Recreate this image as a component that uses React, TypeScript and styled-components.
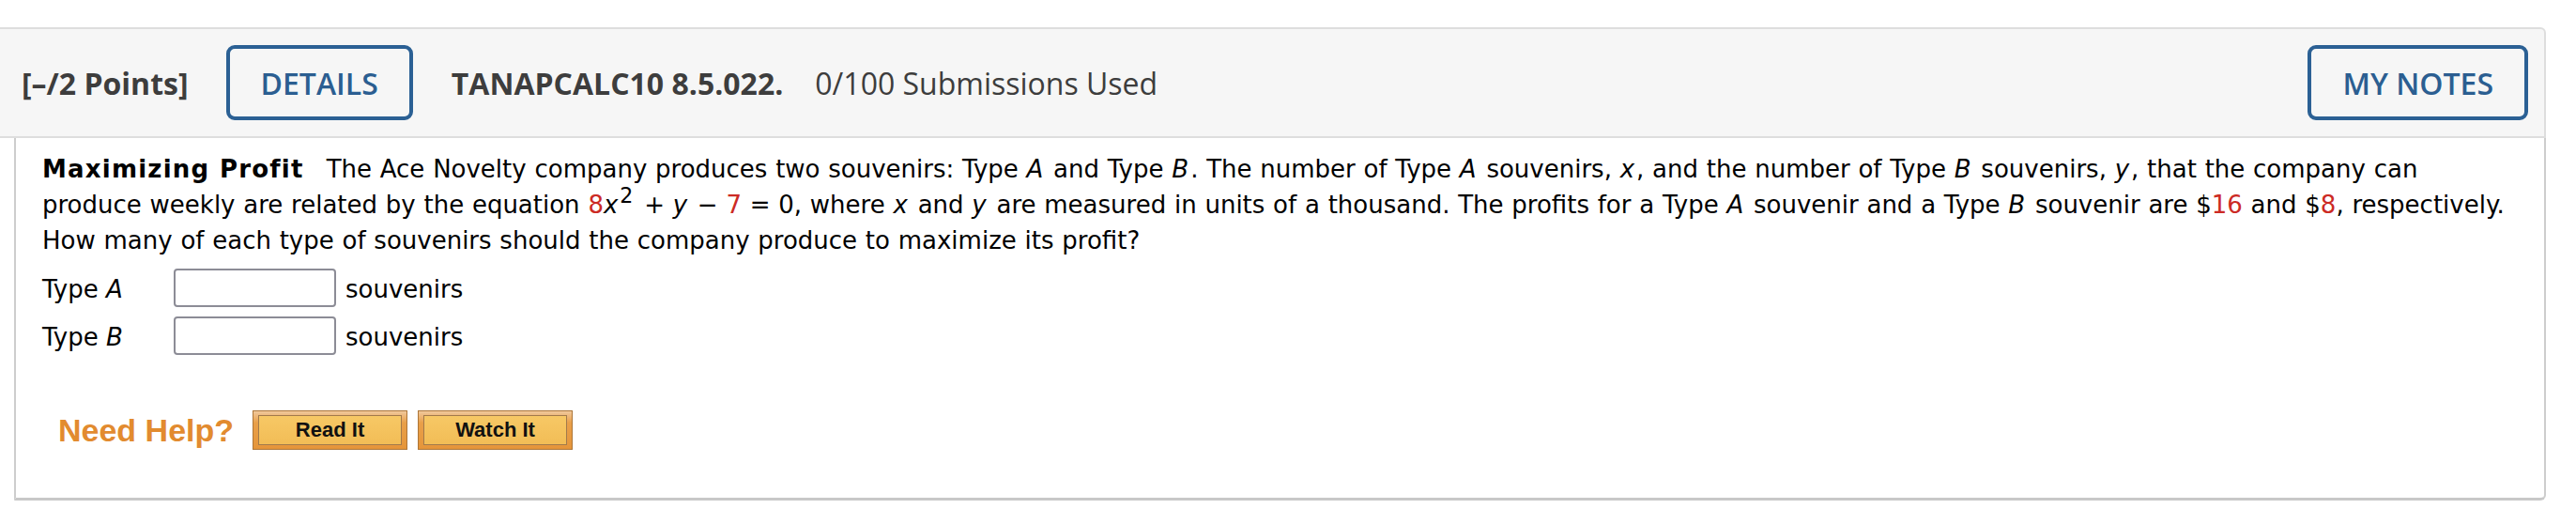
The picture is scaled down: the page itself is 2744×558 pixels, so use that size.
import React from 'react';
import styled, {createGlobalStyle} from 'styled-components';

const GlobalStyle = createGlobalStyle`
  body {
    margin: 0;
    background: #ffffff;
    font-family: "DejaVu Sans", Verdana, sans-serif;
  }
`

const Page = styled.div`
  padding-top: 29px;
  width: 2712px;
`

const Header = styled.div`
  display: flex;
  align-items: center;
  background: #f6f6f6;
  border-top: 2px solid #dedede;
  border-bottom: 2px solid #dedede;
  border-right: 2px solid #dedede;
  border-top-right-radius: 6px;
  padding: 17px 17px 17px 23px;
  font-family: "Open Sans", sans-serif;
  font-size: 32px;
  color: #3d3d3d;
`

const Points = styled.span`
  font-weight: 700;
  margin-right: 40px;
`

const HeaderButton = styled.button`
  box-sizing: border-box;
  height: 80px;
  padding: 0 33px;
  background: transparent;
  border: 4px solid #2b6094;
  border-radius: 9px;
  font-family: "Open Sans", sans-serif;
  font-size: 32px;
  font-weight: 600;
  color: #2b5e91;
`

const QuestionId = styled.span`
  font-weight: 700;
  margin-left: 41px;
  margin-right: 34px;
`

const Submissions = styled.span`
  font-weight: 400;
  flex: 1;
`

const Body = styled.div`
  margin-left: 15px;
  border-left: 2px solid #cdcdcd;
  border-right: 2px solid #cdcdcd;
  border-bottom: 3px solid #c8c8c8;
  border-bottom-right-radius: 6px;
  padding: 14px 20px 51px 28px;
  font-size: 26px;
  line-height: 38px;
  color: #000;
`

const Text = styled.p`
  margin: 0;
  white-space: nowrap;
  word-spacing: 0.5px;
`

const Lead = styled.b`
  letter-spacing: 1.2px;
  margin-right: 24px;
`

const Var = styled.i`
  padding-right: 2px;
`

const Red = styled.span`
  color: #cc2a24;
`

const Sup = styled.sup`
  font-size: 0.85em;
  line-height: 0;
  vertical-align: 0.5em;
  padding-right: 3px;
`

const Answers = styled.div`
  display: flex;
  flex-direction: column;
  gap: 10px;
  margin-top: 11px;
`

const AnswerRow = styled.div`
  display: flex;
  align-items: center;
`

const Label = styled.span`
  width: 140px;
  padding-top: 2px;
`

const Input = styled.input`
  box-sizing: border-box;
  width: 173px;
  height: 41px;
  border: 2px solid #8c8c96;
  border-radius: 4px;
  background: #fff;
  margin-right: 10px;
`

const Unit = styled.span`
  padding-top: 2px;
`

const HelpRow = styled.div`
  display: flex;
  align-items: center;
  margin-top: 59px;
  padding-left: 17px;
`

const NeedHelp = styled.span`
  font-family: "Liberation Sans", Arial, sans-serif;
  font-weight: 700;
  font-size: 34px;
  line-height: 42px;
  color: #e28b2f;
  margin-right: 20px;
`

const HelpButton = styled.button`
  box-sizing: border-box;
  width: 165px;
  height: 42px;
  padding: 4px 5px 4px;
  margin-right: 11px;
  border: 1px solid #ad7638;
  background: linear-gradient(#f0c89c 0%, #e9a04a 30%, #e5953a 100%);
  cursor: pointer;
`

const HelpFace = styled.span`
  display: flex;
  align-items: center;
  justify-content: center;
  height: 100%;
  box-sizing: border-box;
  border: 1px solid #a27a4c;
  background: linear-gradient(#f7c865 0%, #f2bd56 100%);
  font-family: "Liberation Sans", Arial, sans-serif;
  font-weight: 700;
  font-size: 22px;
  color: #111;
`

const App = () => {
  return (
    <Page>
      <GlobalStyle />
      <Header>
        <Points>[–/2 Points]</Points>
        <HeaderButton>DETAILS</HeaderButton>
        <QuestionId>TANAPCALC10 8.5.022.</QuestionId>
        <Submissions>0/100 Submissions Used</Submissions>
        <HeaderButton>MY NOTES</HeaderButton>
      </Header>
      <Body>
        <Text>
          <Lead>Maximizing Profit</Lead>The Ace Novelty company produces two souvenirs: Type <Var>A</Var> and Type <Var>B</Var>. The number of Type <Var>A</Var> souvenirs, <Var>x</Var>, and the number of Type <Var>B</Var> souvenirs, <Var>y</Var>, that the company can
          <br />
          produce weekly are related by the equation <Red>8</Red><Var>x</Var><Sup>2</Sup> + <Var>y</Var> − <Red>7</Red> = 0, where <Var>x</Var> and <Var>y</Var> are measured in units of a thousand. The profits for a Type <Var>A</Var> souvenir and a Type <Var>B</Var> souvenir are $<Red>16</Red> and $<Red>8</Red>, respectively.
          <br />
          How many of each type of souvenirs should the company produce to maximize its profit?
        </Text>
        <Answers>
          <AnswerRow>
            <Label>Type <Var>A</Var></Label>
            <Input type="text" />
            <Unit>souvenirs</Unit>
          </AnswerRow>
          <AnswerRow>
            <Label>Type <Var>B</Var></Label>
            <Input type="text" />
            <Unit>souvenirs</Unit>
          </AnswerRow>
        </Answers>
        <HelpRow>
          <NeedHelp>Need Help?</NeedHelp>
          <HelpButton><HelpFace>Read It</HelpFace></HelpButton>
          <HelpButton><HelpFace>Watch It</HelpFace></HelpButton>
        </HelpRow>
      </Body>
    </Page>
  );
};

export default App;
